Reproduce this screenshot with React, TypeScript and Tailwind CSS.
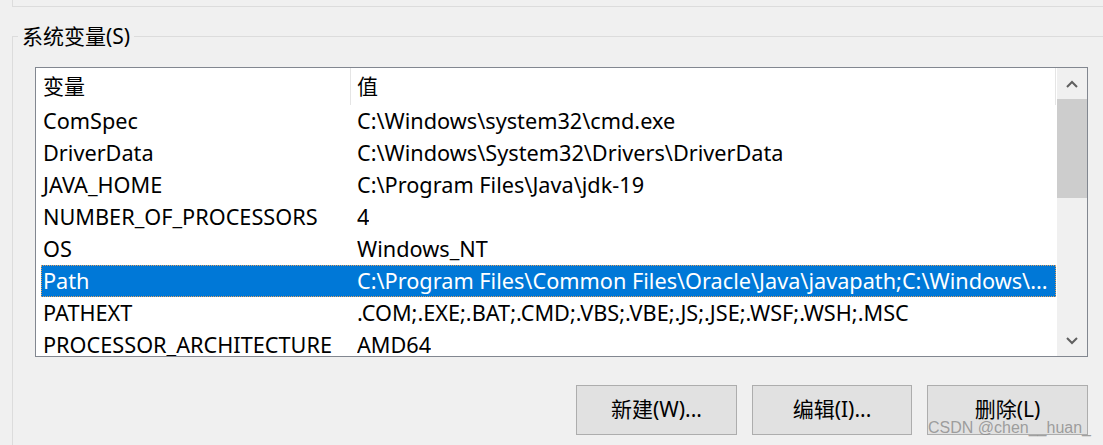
const rows: [string, string][] = [
  ["ComSpec", "C:\\Windows\\system32\\cmd.exe"],
  ["DriverData", "C:\\Windows\\System32\\Drivers\\DriverData"],
  ["JAVA_HOME", "C:\\Program Files\\Java\\jdk-19"],
  ["NUMBER_OF_PROCESSORS", "4"],
  ["OS", "Windows_NT"],
  ["Path", "C:\\Program Files\\Common Files\\Oracle\\Java\\javapath;C:\\Windows\\..."],
  ["PATHEXT", ".COM;.EXE;.BAT;.CMD;.VBS;.VBE;.JS;.JSE;.WSF;.WSH;.MSC"],
  ["PROCESSOR_ARCHITECTURE", "AMD64"],
];

function Chevron({ up }: { up?: boolean }) {
  return (
    <svg width="12" height="8" viewBox="0 0 12 8">
      <path
        d={up ? "M1 7 L6 2 L11 7" : "M1 1 L6 6 L11 1"}
        fill="none"
        stroke="#606060"
        strokeWidth="2"
      />
    </svg>
  );
}

export default function App() {
  const selected = "Path";

  return (
    <div className="relative w-[1103px] h-[445px] overflow-hidden bg-[#f0f0f0] text-black font-['Noto_Sans','Noto_Sans_CJK_SC',sans-serif]">
      {/* bottom edge of the group above */}
      <div className="ml-[12px] h-[7px] border-l border-b border-[#dcdcdc]" />

      {/* 系统变量 group */}
      <div className="relative ml-[12px] mt-[29px] h-[409px] border-l border-t border-[#dcdcdc] pl-[22px] pt-[30px]">
        <span className="absolute left-[5px] top-[-15px] bg-[#f0f0f0] px-[4px] text-[21px] leading-[28px]">
          系统变量(S)
        </span>

        <div className="flex w-[1053px] h-[290px] border border-[#828790] bg-white">
          <div className="w-[1021px] overflow-hidden">
            <div className="flex h-[37px] text-[21px]">
              <div className="w-[315px] border-r border-[#e5e5e5] pl-[7px] flex items-center">变量</div>
              <div className="w-[705px] border-r border-[#e5e5e5] pl-[6px] flex items-center">值</div>
            </div>
            {rows.map(([name, value]) => {
              const sel = name === selected;
              return (
                <div key={name} className="pl-[5px]">
                  <div
                    className={
                      sel
                        ? "flex items-center w-[1015px] h-[32px] bg-[#0078d7] text-white text-[21.7px] whitespace-nowrap outline-1 outline-dotted outline-[#e0a060] -outline-offset-1"
                        : "flex items-center w-[1015px] h-[32px] text-[21.7px] whitespace-nowrap"
                    }
                  >
                    <div className="w-[316px] pl-[2px] shrink-0">{name}</div>
                    <div className="overflow-hidden">{value}</div>
                  </div>
                </div>
              );
            })}
          </div>

          {/* scrollbar */}
          <div className="flex flex-col w-[30px] bg-[#f0f0f0]">
            <div className="h-[31px] flex items-center justify-center">
              <Chevron up />
            </div>
            <div className="h-[99px] bg-[#cdcdcd]" />
            <div className="flex-1" />
            <div className="h-[31px] flex items-center justify-center">
              <Chevron />
            </div>
          </div>
        </div>

        <div className="flex justify-end gap-[15px] w-[1053px] mt-[28px] text-[21px]">
          <button className="w-[161px] h-[50px] border border-[#adadad] bg-[#e1e1e1]">新建(W)...</button>
          <button className="w-[160px] h-[50px] border border-[#adadad] bg-[#e1e1e1]">编辑(I)...</button>
          <button className="w-[161px] h-[50px] border border-[#adadad] bg-[#e1e1e1]">删除(L)</button>
        </div>
      </div>

      <span className="absolute left-[928px] top-[418px] text-[16px] leading-[20px] text-[#8a8a8a]/80 font-['Liberation_Sans',sans-serif]">
        CSDN @chen__huan_
      </span>
    </div>
  );
}
